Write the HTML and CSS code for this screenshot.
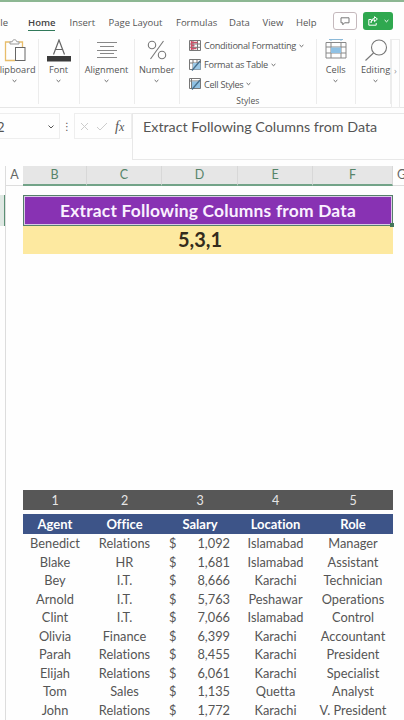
FILE: index.html
```html
<!DOCTYPE html>
<html lang="en">
<head>
  <meta charset="utf-8">
  <title>Extract Following Columns from Data</title>
  <link rel="stylesheet" href="styles.css">
</head>
<body>
  <div class="titlebar"></div>

  <nav class="tabs">
    <span class="tab file">File</span>
    <span class="tab"><span class="active">Home</span></span>
    <span class="tab">Insert</span>
    <span class="tab">Page Layout</span>
    <span class="tab">Formulas</span>
    <span class="tab">Data</span>
    <span class="tab">View</span>
    <span class="tab">Help</span>
    <button class="comment">
      <svg width="10" height="9" viewBox="0 0 10 9"><path d="M1 .8h8v5H4.5L2.8 7.8v-2H1z"/></svg>
    </button>
    <button class="share">
      <svg width="10" height="10" viewBox="0 0 10 10"><path d="M3.5 3.5H.8v5.7h7.4V7M3 6.8c.3-2 1.5-3 3.5-3v1.9L9.4 3 6.5.7v1.7C4.3 2.6 3 4.2 3 6.8z"/></svg>
      <svg width="5" height="4" viewBox="0 0 5 4"><path d="M.6 1l1.9 1.8L4.4 1"/></svg>
    </button>
  </nav>

  <div class="ribbon">
    <div class="group clipboard">
      <svg class="icon" width="24" height="24" viewBox="0 0 24 24">
        <path d="M7 3H2.500v18.500H12M16 3h3.500v5" stroke="#e8bd6a" stroke-width="1.300"/>
        <path d="M7 5V2.800h2.200C9.500 0 13.500 0 13.800 2.800H16V5z" stroke="#999"/>
        <rect x="12.500" y="8.500" width="9.500" height="13" fill="#fff" stroke="#666"/>
      </svg>
      <span class="label">Clipboard</span>
      <svg class="chev" width="5" height="4" viewBox="0 0 5 4"><path d="M.6 1l1.900 1.700L4.400 1"/></svg>
    </div>
    <div class="group">
      <svg class="icon" width="24" height="24" viewBox="0 0 24 24">
        <path d="M6.500 15.500L12 1l5.500 14.500M8.400 10.500h7.200" stroke="#666" stroke-width="1.200"/>
        <rect x="0" y="17" width="24" height="5.500" fill="#3b3b3b"/>
      </svg>
      <span class="label">Font</span>
      <svg class="chev" width="5" height="4" viewBox="0 0 5 4"><path d="M.6 1l1.900 1.700L4.400 1"/></svg>
    </div>
    <div class="group">
      <svg class="icon" width="24" height="24" viewBox="0 0 24 24">
        <path d="M2 3.500h20M5 7.500h14M2 11.500h20M5 14.500h14M2 18.500h20" stroke="#888"/>
      </svg>
      <span class="label">Alignment</span>
      <svg class="chev" width="5" height="4" viewBox="0 0 5 4"><path d="M.6 1l1.900 1.700L4.400 1"/></svg>
    </div>
    <div class="group">
      <svg class="icon" width="24" height="24" viewBox="0 0 24 24">
        <g stroke="#777" stroke-width="1.100"><circle cx="7" cy="6" r="3.700"/><circle cx="17" cy="16" r="3.700"/><path d="M18.500 2L5.500 20"/></g>
      </svg>
      <span class="label">Number</span>
      <svg class="chev" width="5" height="4" viewBox="0 0 5 4"><path d="M.6 1l1.900 1.700L4.400 1"/></svg>
    </div>
    <div class="group styles">
      <div class="cmd">
        <svg width="12" height="12" viewBox="0 0 12 12"><path d="M.5 .5h11v10H.5zM.5 4h11M.5 7.300h11M4 .5v10M8.500 .5v10" stroke="#777"/><path d="M2.500 1v9M2.500 2.500h6M2.500 5.500h3M2.500 8.500h5" stroke="#cf5068" stroke-width="1.500"/></svg>
        <span>Conditional Formatting</span>
        <svg class="chev" width="5" height="4" viewBox="0 0 5 4"><path d="M.6 1l1.900 1.700L4.400 1"/></svg>
      </div>
      <div class="cmd">
        <svg width="12" height="12" viewBox="0 0 12 12"><path d="M.5 .5h11v10H.5zM.5 4h11M4 .5v10M8 .5v10" stroke="#777"/><path d="M4 4h7.500v6.500H4z" fill="#9cc8e6"/><path d="M11 2L5.500 8.500 3 11.500" stroke="#476f8c" stroke-width="1.300"/></svg>
        <span>Format as Table</span>
        <svg class="chev" width="5" height="4" viewBox="0 0 5 4"><path d="M.6 1l1.900 1.700L4.400 1"/></svg>
      </div>
      <div class="cmd">
        <svg width="12" height="12" viewBox="0 0 12 12"><path d="M.5 .5h11v10H.5zM.5 3h11M2.500 .5v10" stroke="#777"/><path d="M3 3.500h8v6.500H3z" fill="#8fc1e4"/><path d="M11 2L5.500 8.500 3 11.500" stroke="#476f8c" stroke-width="1.300"/></svg>
        <span>Cell Styles</span>
        <svg class="chev" width="5" height="4" viewBox="0 0 5 4"><path d="M.6 1l1.900 1.700L4.400 1"/></svg>
      </div>
      <div class="caption">Styles</div>
    </div>
    <div class="group">
      <svg class="icon" width="24" height="24" viewBox="0 0 24 24">
        <path d="M5 .5h14M7 0v2M17 0v2" stroke="#8bb9d8"/>
        <path d="M2 3.500h20v15.500H2zM2 8h20M2 14h20M7 3.500v15.500M17 3.500v15.500" stroke="#888"/>
        <rect x="7" y="8.500" width="10" height="5.500" fill="#8fc1e4"/>
      </svg>
      <span class="label">Cells</span>
      <svg class="chev" width="5" height="4" viewBox="0 0 5 4"><path d="M.6 1l1.900 1.700L4.400 1"/></svg>
    </div>
    <div class="group editing">
      <svg class="icon" width="24" height="24" viewBox="0 0 24 24">
        <g stroke="#777" stroke-width="1.100"><circle cx="15" cy="8.500" r="7.500"/><path d="M9.500 14L1.500 21.500"/></g>
      </svg>
      <span class="label">Editing</span>
      <svg class="chev" width="5" height="4" viewBox="0 0 5 4"><path d="M.6 1l1.900 1.700L4.400 1"/></svg>
    </div>
    <div class="scroller">›</div>
  </div>

  <div class="formula-bar">
    <div class="name-box">
      <span>2</span>
      <svg width="8" height="6" viewBox="0 0 8 6"><path d="M1.500 1.500L4 4l2.500-2.500"/></svg>
    </div>
    <div class="dots">⋮</div>
    <div class="fx">
      <svg width="9" height="9" viewBox="0 0 9 9"><path d="M1 1l7 7M8 1L1 8"/></svg>
      <svg width="12" height="9" viewBox="0 0 12 9"><path d="M1 5l3 3 7-7"/></svg>
      <span>f<small>x</small></span>
    </div>
    <div class="formula">Extract Following Columns from Data</div>
  </div>

  <div class="sheet">
    <div class="row-strip"><div class="row-selected"></div></div>
    <div class="grid">
      <div class="cols letters">
        <span class="plain">A</span><span>B</span><span>C</span><span>D</span><span>E</span><span>F</span><span class="plain last">G</span>
      </div>
      <div class="block">
        <div class="heading">Extract Following Columns from Data</div>
        <div class="picked">5,3,1</div>
        <div class="cols numbers"><span>1</span><span>2</span><span>3</span><span>4</span><span>5</span></div>
        <div class="cols headers"><span>Agent</span><span>Office</span><span>Salary</span><span>Location</span><span>Role</span></div>
        <div class="cols data"><span>Benedict</span><span>Relations</span><span class="money"><i>$</i>1,092</span><span>Islamabad</span><span>Manager</span></div>
        <div class="cols data"><span>Blake</span><span>HR</span><span class="money"><i>$</i>1,681</span><span>Islamabad</span><span>Assistant</span></div>
        <div class="cols data"><span>Bey</span><span>I.T.</span><span class="money"><i>$</i>8,666</span><span>Karachi</span><span>Technician</span></div>
        <div class="cols data"><span>Arnold</span><span>I.T.</span><span class="money"><i>$</i>5,763</span><span>Peshawar</span><span>Operations</span></div>
        <div class="cols data"><span>Clint</span><span>I.T.</span><span class="money"><i>$</i>7,066</span><span>Islamabad</span><span>Control</span></div>
        <div class="cols data"><span>Olivia</span><span>Finance</span><span class="money"><i>$</i>6,399</span><span>Karachi</span><span>Accountant</span></div>
        <div class="cols data"><span>Parah</span><span>Relations</span><span class="money"><i>$</i>8,455</span><span>Karachi</span><span>President</span></div>
        <div class="cols data"><span>Elijah</span><span>Relations</span><span class="money"><i>$</i>6,061</span><span>Karachi</span><span>Specialist</span></div>
        <div class="cols data"><span>Tom</span><span>Sales</span><span class="money"><i>$</i>1,135</span><span>Quetta</span><span>Analyst</span></div>
        <div class="cols data"><span>John</span><span>Relations</span><span class="money"><i>$</i>1,772</span><span>Karachi</span><span>V. President</span></div>
      </div>
    </div>
  </div>
</body>
</html>
```
FILE: styles.css
```css
* {
  box-sizing: border-box;
}

body {
  margin: 0;
  width: 404px;
  height: 720px;
  overflow: hidden;
  background-color: #fefefe;
  color: #555;
  font-family: "Open Sans", "Noto Sans", sans-serif;
  font-size: 9.5px;
  font-variant-ligatures: none;
}

svg {
  display: block;
  fill: none;
  flex: none;
}

.titlebar {
  height: 2px;
  background-color: #8db793;
}

/* ribbon tabs */
.tabs {
  display: grid;
  grid-template-columns: 28px 41.5px 39px 67.5px 53px 33.5px 33.5px 37px 24px 29px;
  align-items: center;
  height: 37px;
  padding-top: 3px;
  white-space: nowrap;
}

.tab {
  line-height: 15px;
}

.file {
  width: 8px;
  display: flex;
  justify-content: flex-end;
}

.active {
  display: inline-block;
  font-weight: 600;
  color: #444;
  border-bottom: 1px solid #31795a;
  margin-top: 1px;
}

.comment,
.share {
  display: flex;
  align-items: center;
  justify-content: center;
  height: 18px;
  padding: 0;
  margin-top: -2px;
  border-radius: 3px;
}

.comment {
  width: 24px;
  background-color: #fff;
  border: 1px solid #c5b9bd;
  stroke: #777;
}

.share {
  width: 30px;
  margin-left: 6px;
  gap: 6px;
  border: none;
  background-color: #2fa84f;
  stroke: #fff;
}

/* ribbon groups */
.ribbon {
  display: grid;
  grid-template-columns: 38.5px 41px 55px 45.5px 136.5px 39.5px 35px 9px;
  height: 69px;
  border-bottom: 1px solid #e6e6e6;
  font-size: 9.2px;
}

.group {
  display: flex;
  flex-direction: column;
  align-items: center;
  height: 65px;
  border-right: 1px solid #ececec;
}

.clipboard {
  width: 38.5px;
  padding-right: 8px;
}

.label {
  line-height: 14px;
  white-space: nowrap;
}

.chev {
  stroke: #666;
  margin-top: 2px;
}

.editing {
  padding-left: 5px;
}

.styles {
  align-items: stretch;
  padding-left: 9px;
}

.cmd {
  display: flex;
  flex: none;
  align-items: center;
  gap: 3px;
  height: 19.300px;
}

.cmd:first-child {
  margin-top: -3px;
}

.cmd span {
  letter-spacing: -0.3px;
}

.cmd .chev {
  margin: 0;
}

.caption {
  margin: 0 0 0 -9px;
  text-align: center;
  font-size: 8.500px;
  line-height: 14px;
}

.scroller {
  height: 69px;
  border: 1px solid #ececec;
  line-height: 61px;
  text-align: center;
  color: #999;
}

/* formula bar */
.formula-bar {
  display: flex;
  height: 52px;
  padding-top: 5px;
  font-family: Lato, sans-serif;
}

.name-box {
  display: flex;
  align-items: center;
  justify-content: space-between;
  width: 60px;
  height: 26px;
  padding: 2px 4px 0 0;
  border: 1px solid #eee;
  border-left: none;
  font-size: 13px;
  stroke: #555;
}

.name-box span {
  margin-left: -3px;
}

.dots {
  width: 14px;
  text-align: center;
  font: 10px/27px "DejaVu Sans", sans-serif;
}

.fx {
  display: flex;
  align-items: center;
  gap: 7px;
  width: 58px;
  height: 26px;
  padding: 1px 0 0 5px;
  border: 1px solid #eee;
  stroke: #ccc;
}

.fx span {
  font: italic 14px "Liberation Serif", serif;
}

.fx small {
  font-size: 12px;
}

.formula {
  flex: 1;
  height: 47px;
  padding: 3px 0 0 10px;
  border: 1px solid #e8e8e8;
  border-right: none;
  font-size: 14.300px;
  line-height: 20px;
  white-space: nowrap;
}

/* worksheet */
.sheet {
  display: flex;
  height: 560px;
  padding-top: 6px;
  font-family: Lato, sans-serif;
}

.row-strip {
  width: 6px;
  border-right: 1px solid #ddd;
  padding-top: 29px;
  flex: none;
}

.row-selected {
  height: 31px;
  background-color: #dfe8e3;
  border-right: 1px solid #5b9074;
}

.grid {
  width: 398px;
  flex: none;
}

.cols {
  display: grid;
  grid-template-columns: 64px 75px 76px 75px 80px;
  text-align: center;
}

.letters {
  grid-template-columns: 17px 64px 75px 76px 75px 80px 11px;
  height: 18px;
  font-size: 12.500px;
  line-height: 18px;
}

.letters span {
  background-color: #e6e6e6;
  border-bottom: 2px solid #72a388;
  border-right: 1px solid #d8d8d8;
  color: #568469;
}

.letters .plain {
  background-color: transparent;
  border-bottom: 1px solid #ddd;
  border-right: none;
  color: #666;
}

.letters .last {
  text-align: left;
  padding-left: 4px;
}

.block {
  width: 370px;
  margin: 11px 0 0 17px;
}

.heading {
  position: relative;
  height: 31px;
  border: 1px solid #55806a;
  box-shadow: inset 0 0 0 1px #d9c8e6;
  background-color: #8832b3;
  color: #faf0ff;
  font-size: 17.400px;
  font-weight: bold;
  letter-spacing: 0.2px;
  line-height: 30px;
  text-align: center;
  white-space: nowrap;
}

/* fill handle of the selection */
.heading::after {
  content: "";
  position: absolute;
  right: -2px;
  bottom: -2px;
  width: 4px;
  height: 4px;
  background-color: #44775c;
}

.picked {
  height: 28px;
  margin-bottom: 236px;
  padding-right: 16px;
  background-color: #fde9a0;
  color: #332b1c;
  font-size: 20px;
  font-weight: bold;
  line-height: 27px;
  text-align: center;
}

.numbers {
  height: 20px;
  margin-bottom: 4px;
  background-color: #575757;
  color: #e6e6e6;
  font-size: 12.500px;
  line-height: 21px;
}

.headers {
  height: 20px;
  background-color: #3d5488;
  color: #fff;
  font-size: 13px;
  font-weight: bold;
  line-height: 21px;
}

.data {
  height: 18.550px;
  font-size: 12.800px;
  line-height: 18.550px;
  white-space: nowrap;
}

.money {
  display: flex;
  justify-content: space-between;
  padding: 0 8px 0 7px;
}

.money i {
  font-style: normal;
}
```
